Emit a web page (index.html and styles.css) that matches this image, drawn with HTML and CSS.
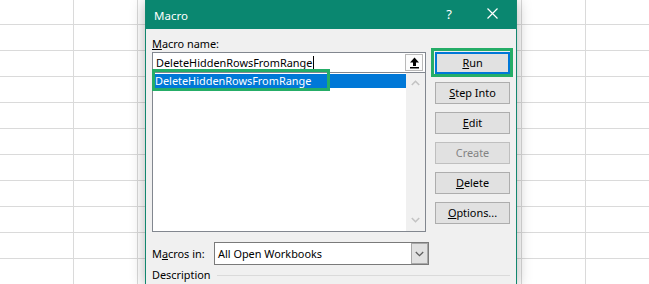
FILE: index.html
```html
<!DOCTYPE html>
<html lang="en">

<head>
  <meta charset="UTF-8">
  <meta name="viewport" content="width=device-width, initial-scale=1.0">
  <title>Macro</title>
  <link rel="stylesheet" href="styles.css">
</head>

<body>
  <div class="sheet">
    <div class="cols"></div>
  </div>

  <div class="dialog">
    <div class="titlebar">
      <span class="title">Macro</span>
      <span class="help">?</span>
      <span class="close">
        <svg width="11" height="11" viewBox="0 0 11 11"><path d="M0.5 0.5 L10.5 10.5 M10.5 0.5 L0.5 10.5" stroke="#fff" stroke-width="1.2" fill="none"/></svg>
      </span>
    </div>

    <div class="content">
      <div class="main">
        <div class="left">
          <div class="label"><u>M</u>acro name:</div>
          <div class="combo">
            <div class="name-input">
              <span class="value">DeleteHiddenRowsFromRange</span><span class="caret"></span>
              <span class="up-btn">
                <svg width="11" height="12" viewBox="0 0 11 12"><path d="M5.5 0.5 L10 5.5 L7 5.5 L7 9 L4 9 L4 5.5 L1 5.5 Z" fill="#000"/><rect x="1" y="10" width="9" height="1.5" fill="#000"/></svg>
              </span>
            </div>
            <div class="list">
              <div class="items">
                <div class="item selected">DeleteHiddenRowsFromRange</div>
              </div>
              <div class="scroll">
                <svg width="9" height="6" viewBox="0 0 9 6"><path d="M0.8 5 L4.5 1.3 L8.2 5" stroke="#c3c3c3" stroke-width="1.6" fill="none"/></svg>
                <svg width="9" height="6" viewBox="0 0 9 6"><path d="M0.8 1 L4.5 4.7 L8.2 1" stroke="#c3c3c3" stroke-width="1.6" fill="none"/></svg>
              </div>
            </div>
          </div>
        </div>

        <div class="buttons">
          <div class="btn btn-default"><u>R</u>un</div>
          <div class="btn"><u>S</u>tep Into</div>
          <div class="btn"><u>E</u>dit</div>
          <div class="btn btn-disabled">Create</div>
          <div class="btn"><u>D</u>elete</div>
          <div class="btn"><u>O</u>ptions...</div>
        </div>
      </div>

      <div class="macros-in">
        <div class="label label-fixed">M<u>a</u>cros in:</div>
        <div class="select">
          <span class="value">All Open Workbooks</span>
          <span class="select-btn">
            <svg width="9" height="6" viewBox="0 0 9 6"><path d="M0.8 1 L4.5 4.7 L8.2 1" stroke="#5f5f5f" stroke-width="1.3" fill="none"/></svg>
          </span>
        </div>
      </div>

      <div class="desc">
        <span class="label">Description</span>
        <span class="rule"></span>
      </div>
    </div>

    <div class="mark mark-list"></div>
    <div class="mark mark-run"></div>
  </div>
</body>

</html>
```

FILE: styles.css
```css
body {
  margin: 0;
  padding: 0;
  width: 649px;
  height: 284px;
  overflow: hidden;
  position: relative;
  background-color: #fff;
  font-family: 'Noto Sans', 'Open Sans', sans-serif;
  font-size: 10.9px;
  color: #000;
}

/* spreadsheet behind the dialog */
.sheet {
  height: 284px;
  background-image: linear-gradient(#dadada 1px, transparent 1px);
  background-size: 100% 26px;
  background-position: 0 24px;
}

.cols {
  margin-left: 73px;
  height: 100%;
  background-image: linear-gradient(90deg, #dadada 1px, transparent 1px);
  background-size: 64px 100%;
}

/* dialog window */
.dialog {
  position: absolute;
  left: 145px;
  top: 0;
  width: 370px;
  height: 284px;
  overflow: hidden;
  border: 1px solid #12876f;
  border-top: none;
  border-bottom: none;
  background-color: #f0f0f0;
  box-shadow: 0 2px 14px rgba(0, 0, 0, 0.3);
}

.titlebar {
  height: 29px;
  background-color: #0a8770;
  color: #fff;
  display: flex;
  align-items: center;
  padding-left: 8px;
}

.title {
  font-size: 11.5px;
  flex: 1;
  padding-top: 2px;
}

.help {
  font-size: 13px;
  margin-right: 35px;
  padding-bottom: 2px;
}

.close {
  display: flex;
  margin-right: 18px;
  margin-bottom: 2px;
}

.content {
  padding: 8px 6px 0 6px;
}

.main {
  display: flex;
  gap: 9px;
}

.left {
  width: 274px;
}

.label {
  line-height: 13px;
  height: 13px;
  margin-bottom: 2px;
}

.label u, .btn u {
  text-underline-offset: 1px;
}

.combo {
  border: 1px solid #82878f;
  background-color: #fff;
}

.name-input {
  height: 19px;
  line-height: 19px;
  border-bottom: 1px solid #82878f;
  display: flex;
  align-items: center;
  padding-left: 3px;
}

.name-input .value {
  line-height: 19px;
}

.caret {
  width: 1px;
  height: 13px;
  background-color: #000;
  margin-left: 1px;
}

.up-btn {
  margin-left: auto;
  margin-right: 2px;
  width: 16px;
  height: 15px;
  border: 1px solid #b9b9b9;
  background-color: #fcfcfc;
  display: flex;
  align-items: center;
  justify-content: center;
}

.list {
  height: 158px;
  display: flex;
}

.items {
  flex: 1;
  padding-top: 1px;
}

.item {
  height: 14px;
  line-height: 13px;
  padding-left: 2px;
}

.selected {
  background-color: #0078d7;
  color: #fff;
}

.scroll {
  width: 19px;
  background-color: #f0f0f0;
  display: flex;
  flex-direction: column;
  justify-content: space-between;
  align-items: center;
  padding: 7px 0 8px 0;
  box-sizing: border-box;
}

.buttons {
  margin-top: 15px;
  width: 75px;
  display: flex;
  flex-direction: column;
  gap: 8px;
}

.btn {
  height: 20px;
  line-height: 19px;
  border: 1px solid #adadad;
  background-color: #e1e1e1;
  text-align: center;
}

.btn-default {
  border: 2px solid #0078d7;
  height: 18px;
  line-height: 17px;
}

.btn-disabled {
  color: #838383;
  border-color: #bfbfbf;
}

.macros-in {
  display: flex;
  align-items: center;
  margin-top: 10px;
}

.label-fixed {
  width: 62px;
  margin-bottom: 0;
}

.select {
  width: 210px;
  height: 21px;
  border: 1px solid #7a7a7a;
  background-color: #fff;
  display: flex;
  align-items: center;
  padding-left: 3px;
}

.select .value {
  flex: 1;
}

.select-btn {
  width: 15px;
  height: 19px;
  border: 1px solid #a8a8a8;
  background-color: #e1e1e1;
  display: flex;
  align-items: center;
  justify-content: center;
}

.desc {
  display: flex;
  align-items: center;
  margin-top: 3px;
}

.desc .label {
  margin-bottom: 0;
}

.rule {
  flex: 1;
  height: 1px;
  background-color: #dadada;
  margin-left: 6px;
  margin-top: 1px;
}

/* green highlight boxes drawn over the dialog */
.mark {
  position: absolute;
  border: 3px solid #25ad67;
}

.mark-list {
  left: 6px;
  top: 69px;
  width: 172px;
  height: 16px;
}

.mark-run {
  left: 285px;
  top: 48px;
  width: 76px;
  height: 23px;
}
```
